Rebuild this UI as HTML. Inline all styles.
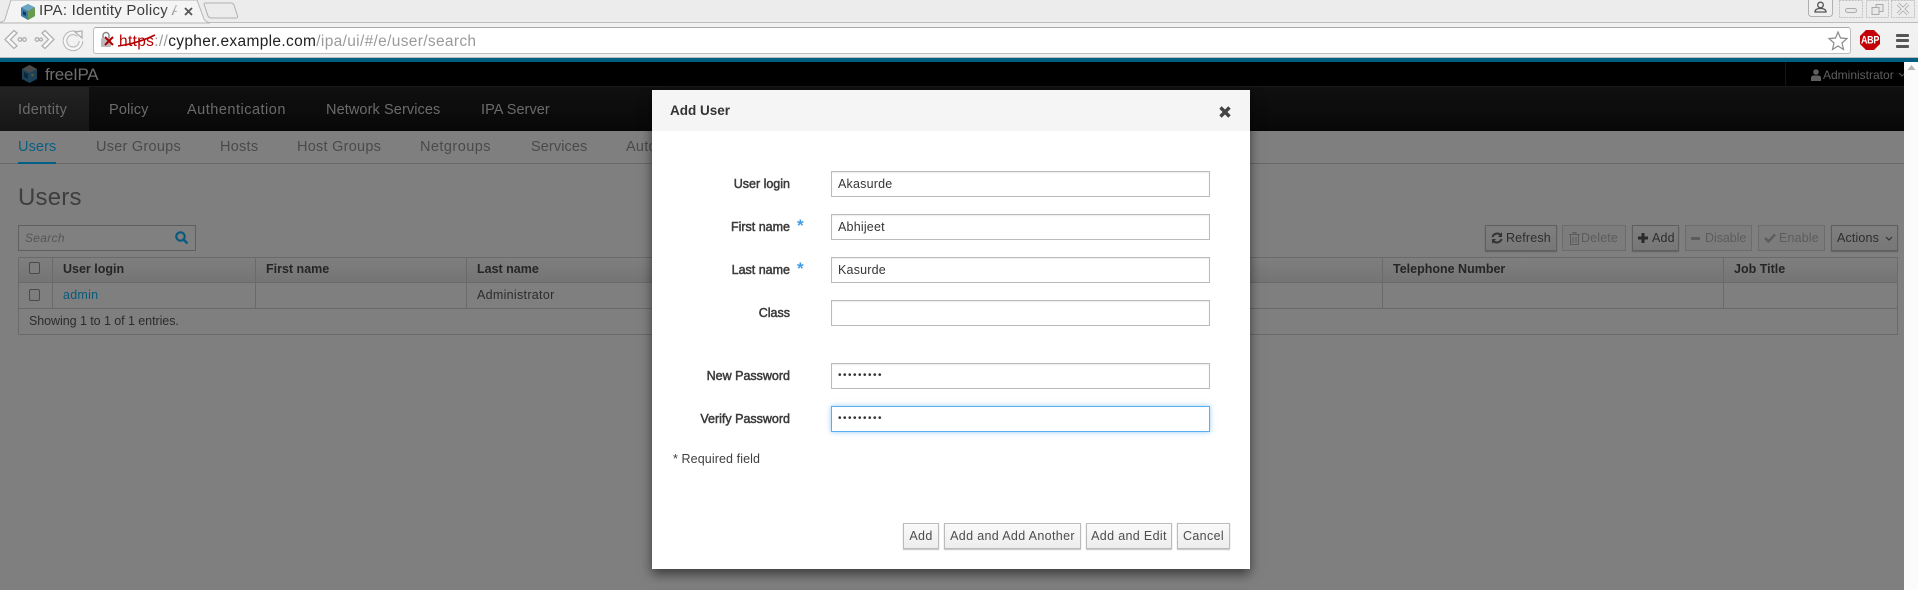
<!DOCTYPE html>
<html><head><meta charset="utf-8"><title>IPA: Identity Policy Audit</title>
<style>
html,body{margin:0;padding:0;width:1918px;height:590px;overflow:hidden;background:#7f7f7f;font-family:"Liberation Sans",sans-serif}
.a{position:absolute;white-space:nowrap}
.t{position:absolute;white-space:nowrap;line-height:20px;height:20px}
svg{position:absolute;overflow:visible}
.nav{font-size:14.5px;color:#6b6b6b;letter-spacing:.2px}
.sub{font-size:14.5px;color:#4a4a4a;letter-spacing:.25px}
.th{font-size:12.5px;font-weight:bold;color:#252525;transform-origin:0 50%}
.td{font-size:12.5px;color:#2c2c2c;letter-spacing:.25px}
.vl{position:absolute;width:1px;background:#6a6a6a}
.lb{position:absolute;white-space:nowrap;right:1128px;font-size:12.5px;font-weight:normal;-webkit-text-stroke:.5px #3b3b3b;color:#3b3b3b;line-height:20px}
.in{position:absolute;left:831px;width:377px;height:24px;background:#fff;border:1px solid #bbb;box-shadow:inset 0 1px 1px rgba(0,0,0,.08);font-size:12.5px;line-height:24px;color:#363636;text-indent:6px;letter-spacing:.2px}
.bt{position:absolute;box-sizing:border-box;height:26px;top:523px;border:1px solid #bbb;background:linear-gradient(#fafafa,#ededed);box-shadow:0 1px 1px rgba(0,0,0,.25);font-size:12.5px;font-weight:normal;line-height:24px;color:#4d4d4d;text-align:center;letter-spacing:.35px}
.tb{position:absolute;box-sizing:border-box;height:26px;top:225px;border:1px solid #5f5f5f;background:linear-gradient(#7f7f7f,#777);font-size:12.5px;line-height:24px;color:#2d2d2d;box-shadow:0 1px 1px rgba(0,0,0,.25);letter-spacing:.15px}
.tb.d{border-color:#6c6c6c;color:#5c5c5c;box-shadow:none;background:#7c7c7c}
.cb{position:absolute;box-sizing:border-box;width:11px;height:12px;border:1px solid #4a4a4a;border-radius:2px;background:#7d7d7d}
.pw{font-size:10px;letter-spacing:1.5px;color:#333}
</style></head><body>

<!-- browser chrome -->
<div class="a" style="left:0;top:0;width:1918px;height:22px;background:#ececec"></div>
<div class="a" style="left:0;top:22px;width:1918px;height:36px;background:linear-gradient(#f2f2f2,#f0f0f0);border-top:1px solid #bdbdbd;box-sizing:border-box;border-bottom:1px solid #bbb"></div>
<svg style="left:0;top:0" width="240" height="24"><path d="M0 23 L1 22 Q4 22 5 19 L11 0 L197 0 L204 19 Q206 22 210 23 Z" fill="#f4f4f4" stroke="#b5b5b5"/><path d="M204 4 Q204 3 206 3 L231 3 Q233 3 234 5 L237.500 16 Q238 18 236 18 L212 18 Q209 18 208 16 Z" fill="#ececec" stroke="#b0b0b0"/></svg>
<svg style="left:20px;top:4px" width="16" height="16" viewBox="0 0 16 16"><path d="M8 0 L15 3.500 V12 L8 16 L1 12 V3.500 Z" fill="#3d7ca6"/><path d="M8 0 L15 3.500 L8 7 L1 3.500 Z" fill="#6da6c4"/><path d="M8 7 L15 3.500 V12 L8 16 Z" fill="#6a9a50"/><path d="M3 7 L6 8.500 V12 L3 10.500Z" fill="#123a5a"/></svg>
<div class="t" style="left:39px;top:1px;font-size:15px;color:#3b3b3b;letter-spacing:.25px;width:138px;overflow:hidden;-webkit-mask-image:linear-gradient(90deg,#000 125px,rgba(0,0,0,.25) 138px)">IPA: Identity Policy Audit</div>
<svg style="left:184px;top:7px" width="9" height="9"><path d="M1 1 L8 8 M8 1 L1 8" stroke="#555" stroke-width="1.800"/></svg>

<!-- window controls -->
<svg style="left:1808px;top:-1px" width="110" height="20">
<rect x=".5" y="-3" width="24" height="20.500" rx="3" fill="#efefef" stroke="#b0b0b0"/>
<circle cx="12.500" cy="6" r="2.800" fill="none" stroke="#555" stroke-width="1.300"/><path d="M7 13 Q7 9.500 12.500 9.500 Q18 9.500 18 13 Z" fill="none" stroke="#555" stroke-width="1.300"/>
<g fill="none" stroke="#c0c0c0" stroke-dasharray="2 1"><rect x="31.500" y="1.500" width="23" height="17"/><rect x="58.500" y="1.500" width="22" height="17"/><rect x="83.500" y="1.500" width="23" height="17"/></g>
<rect x="37.500" y="9.500" width="11" height="4" rx="2" fill="#e8e8e8" stroke="#aaa"/>
<g fill="#e8e8e8" stroke="#aaa"><rect x="68" y="5.500" width="7" height="7"/><rect x="64" y="8.500" width="7" height="7"/></g>
<path d="M90 5 L100 15 M100 5 L90 15" stroke="#aaa" stroke-width="3.400"/><path d="M90 5 L100 15 M100 5 L90 15" stroke="#eee" stroke-width="1.800"/>
</svg>

<!-- toolbar icons -->
<svg style="left:4px;top:29px" width="90" height="22" fill="none" stroke="#b0b0b0" stroke-width="1.300">
<path d="M10 1.500 L1 10.500 L10 19.500 L13 17 L6.500 10.500 L13 4 Z" fill="#fafafa"/><circle cx="16" cy="10.500" r="1.800"/><circle cx="20.500" cy="10.500" r="1.800"/>
<path d="M41 1.500 L50 10.500 L41 19.500 L38 17 L44.500 10.500 L38 4 Z" fill="#fafafa"/><circle cx="33" cy="10.500" r="1.800"/><circle cx="37" cy="10.500" r="1.500"/>
<path d="M74.500 6 A8 8 0 1 0 77 12" stroke-width="4.600" stroke="#b5b5b5"/><path d="M74.500 6 A8 8 0 1 0 77 12" stroke-width="2.600" stroke="#f6f6f6"/><path d="M71 3 L78 2 L78 9 Z" fill="#f6f6f6"/>
</svg>

<!-- url bar -->
<div class="a" style="left:93px;top:27px;width:1758px;height:27px;box-sizing:border-box;background:#fff;border:1px solid #bdbdbd;border-top-color:#a8a8a8;border-radius:3px"></div>
<svg style="left:100px;top:31px" width="20" height="18"><rect x="1" y="7" width="10" height="9" rx="1" fill="#bbb"/><path d="M3 7 V4.500 A3 3 0 0 1 9 4.500 V7" fill="none" stroke="#888" stroke-width="1.500"/><path d="M5 6 L13 14 M13 6 L5 14" stroke="#b40000" stroke-width="2"/></svg>
<div class="t" style="left:119px;top:32px;font-size:15.500px;letter-spacing:.33px;color:#9a9a9a"><span style="color:#b40000">https</span>://<span style="color:#202020">cypher.example.com</span>/ipa/ui/#/e/user/search</div>
<svg style="left:118px;top:33px" width="40" height="16"><path d="M0 13 Q18 11 37 2" fill="none" stroke="#b40000" stroke-width="1.600"/></svg>
<svg style="left:1828px;top:31px" width="20" height="19"><path d="M10 1 L12.500 7 L19 7.500 L14 12 L15.500 18.500 L10 15 L4.500 18.500 L6 12 L1 7.500 L7.500 7 Z" fill="#fff" stroke="#8a8a8a" stroke-width="1.200"/></svg>
<svg style="left:1860px;top:30px" width="20" height="20"><path d="M6 0 H14 L20 6 V14 L14 20 H6 L0 14 V6 Z" fill="#c20006"/></svg>
<div class="a" style="left:1860px;top:30px;width:20px;text-align:center;line-height:20px;font-size:9px;font-weight:bold;color:#fff;letter-spacing:-.3px;transform:scaleY(1.200)">ABP</div>
<div class="a" style="left:1896px;top:34px;width:13px;height:3px;background:#555;border-radius:1px"></div>
<div class="a" style="left:1896px;top:39px;width:13px;height:3px;background:#555;border-radius:1px"></div>
<div class="a" style="left:1896px;top:45px;width:13px;height:3px;background:#555;border-radius:1px"></div>

<!-- page -->
<div class="a" style="left:0;top:58px;width:1918px;height:4px;background:#005e80"></div>
<div class="a" style="left:0;top:62px;width:1904px;height:25px;background:#000;border-bottom:1px solid #1a1a1a;box-sizing:border-box"></div>
<div class="a" style="left:0;top:87px;width:1904px;height:44px;background:linear-gradient(#101010,#080808)"></div>
<div class="a" style="left:0;top:87px;width:89px;height:44px;background:linear-gradient(#232323,#161616)"></div>
<div class="a" style="left:0;top:131px;width:1904px;height:459px;background:#7f7f7f"></div>
<div class="a" style="left:0;top:163px;width:1904px;height:1px;background:#686868"></div>
<div class="a" style="left:1904px;top:62px;width:14px;height:528px;background:#fbfbfb"></div>
<svg style="left:1907px;top:64px" width="9" height="7"><path d="M4.500 1 L8.500 6 H.5 Z" fill="#b5b5b5"/></svg>

<!-- logo -->
<svg style="left:21px;top:65px" width="17" height="18" viewBox="0 0 17 18"><path d="M8.500 0 L16 4 V14 L8.500 18 L1 14 V4 Z" fill="#1d4257"/><path d="M8.500 0 L16 4 L8.500 8 L1 4 Z" fill="#4a4a4a"/><path d="M3 7 L7 9 V14 L3 12 Z" fill="#0c2739"/><circle cx="11.500" cy="10" r="1.300" fill="#5a5a3a"/></svg>
<div class="t" style="left:45px;top:65px;font-size:17px;color:#6e6e6e;letter-spacing:-.3px">freeIPA</div>

<!-- admin -->
<div class="a" style="left:1785px;top:62px;width:1px;height:25px;background:#161616"></div>
<svg style="left:1811px;top:69px" width="10" height="12"><circle cx="5" cy="3" r="2.800" fill="#5f5f5f"/><path d="M0 12 V9 Q0 6.500 3 6.500 H7 Q10 6.500 10 9 V12 Z" fill="#5f5f5f"/></svg>
<div class="t" style="left:1823px;top:65px;font-size:12px;color:#5f5f5f">Administrator</div>
<svg style="left:1899px;top:72px" width="6" height="6"><path d="M0 1 L3 4 L5 2" fill="none" stroke="#555"/></svg>

<!-- nav -->
<div class="t nav" style="left:18px;top:100px;letter-spacing:.3px">Identity</div>
<div class="t nav" style="left:109px;top:100px;letter-spacing:.15px">Policy</div>
<div class="t nav" style="left:187px;top:100px;letter-spacing:.5px">Authentication</div>
<div class="t nav" style="left:326px;top:100px;letter-spacing:.1px">Network Services</div>
<div class="t nav" style="left:481px;top:100px;letter-spacing:.05px">IPA Server</div>

<!-- subnav -->
<div class="t sub" style="left:18px;top:137px;color:#0b5f85;letter-spacing:.1px">Users</div>
<div class="a" style="left:18px;top:162px;width:38px;height:2px;background:#005f86"></div>
<div class="t sub" style="left:96px;top:137px">User Groups</div>
<div class="t sub" style="left:220px;top:137px">Hosts</div>
<div class="t sub" style="left:297px;top:137px">Host Groups</div>
<div class="t sub" style="left:420px;top:137px;letter-spacing:.45px">Netgroups</div>
<div class="t sub" style="left:531px;top:137px;letter-spacing:.1px">Services</div>
<div class="t sub" style="left:626px;top:137px">Automember</div>

<div class="a" style="left:18px;top:183px;font-size:24px;line-height:30px;color:#3e3e3e;letter-spacing:.2px">Users</div>

<!-- search -->
<div class="a" style="left:18px;top:225px;width:178px;height:26px;box-sizing:border-box;border:1px solid #5f5f5f;background:#808080"></div>
<div class="t" style="left:25px;top:228px;font-size:12px;font-style:italic;color:#565656;letter-spacing:.3px">Search</div>
<svg style="left:175px;top:231px" width="14" height="14"><circle cx="5.500" cy="5.500" r="4.200" fill="none" stroke="#0a5a7d" stroke-width="2.200"/><path d="M8.500 8.500 L12.500 12.500" stroke="#0a5a7d" stroke-width="2.400"/></svg>

<!-- toolbar buttons -->
<div class="tb" style="left:1485px;width:72px;padding-left:20px">Refresh</div>
<svg style="left:1491px;top:232px" width="12" height="12" fill="none" stroke="#333" stroke-width="2"><path d="M1.500 5 A4.800 4.800 0 0 1 10 3.500"/><path d="M10.500 7 A4.800 4.800 0 0 1 2 8.500"/><path d="M11 0 V5 H7 Z M1 12 V7 H5 Z" fill="#333" stroke="none"/></svg>
<div class="tb d" style="left:1562px;width:64px;padding-left:18px">Delete</div>
<svg style="left:1569px;top:232px" width="11" height="13" fill="none" stroke="#5c5c5c"><path d="M0 2.500 H11 M4 2 V.5 H7 V2 M1.500 3 V12.500 H9.500 V3 M4 5 V11 M7 5 V11"/></svg>
<div class="tb" style="left:1632px;width:47px;padding-left:19px;font-weight:normal">Add</div>
<svg style="left:1638px;top:233px" width="10" height="10"><path d="M0 5 H10 M5 0 V10" stroke="#2a2a2a" stroke-width="3"/></svg>
<div class="tb d" style="left:1685px;width:67px;padding-left:19px;letter-spacing:-.05px">Disable</div>
<div class="a" style="left:1691px;top:237px;width:9px;height:3px;background:#5c5c5c"></div>
<div class="tb d" style="left:1758px;width:67px;padding-left:20px">Enable</div>
<svg style="left:1764px;top:233px" width="12" height="10"><path d="M1 5 L4.500 8.500 L11 1.500" fill="none" stroke="#5c5c5c" stroke-width="2.400"/></svg>
<div class="tb" style="left:1831px;width:67px;padding-left:5px">Actions</div>
<svg style="left:1885px;top:236px" width="8" height="6"><path d="M1 1 L4 4 L7 1" fill="none" stroke="#333" stroke-width="1.200"/></svg>

<!-- table -->
<div class="a" style="left:18px;top:257px;width:1880px;height:78px;box-sizing:border-box;border:1px solid #6a6a6a"></div>
<div class="a" style="left:19px;top:258px;width:1878px;height:24px;background:linear-gradient(#7f7f7f,#747474)"></div>
<div class="a" style="left:19px;top:282px;width:1878px;height:1px;background:#6a6a6a"></div>
<div class="a" style="left:19px;top:308px;width:1878px;height:1px;background:#6a6a6a"></div>
<div class="vl" style="left:52px;top:258px;height:50px"></div>
<div class="vl" style="left:255px;top:258px;height:50px"></div>
<div class="vl" style="left:466px;top:258px;height:50px"></div>
<div class="vl" style="left:1382px;top:258px;height:50px"></div>
<div class="vl" style="left:1723px;top:258px;height:50px"></div>
<div class="cb" style="left:29px;top:262px"></div>
<div class="cb" style="left:29px;top:289px"></div>
<div class="t th" style="left:63px;top:259px">User login</div>
<div class="t th" style="left:266px;top:259px">First name</div>
<div class="t th" style="left:477px;top:259px">Last name</div>
<div class="t th" style="left:1393px;top:259px">Telephone Number</div>
<div class="t th" style="left:1734px;top:259px">Job Title</div>
<div class="t td" style="left:63px;top:285px;color:#085a7c">admin</div>
<div class="t td" style="left:477px;top:285px;letter-spacing:.3px">Administrator</div>
<div class="t td" style="left:29px;top:311px;letter-spacing:-.06px">Showing 1 to 1 of 1 entries.</div>

<!-- dialog -->
<div class="a" style="left:652px;top:90px;width:598px;height:479px;background:#fff;box-shadow:0 5px 11px rgba(0,0,0,.55)"></div>
<div class="a" style="left:652px;top:90px;width:598px;height:41px;background:#f5f5f5"></div>
<div class="t" style="left:670px;top:101px;font-size:13.500px;font-weight:bold;color:#333">Add User</div>
<svg style="left:1219px;top:106px" width="12" height="12"><path d="M1.500 1.500 L10.500 10.500 M10.500 1.500 L1.500 10.500" stroke="#444" stroke-width="3.400"/></svg>

<div class="lb" style="top:174px">User login</div>
<div class="lb" style="top:217px">First name</div>
<div class="lb" style="top:260px">Last name</div>
<div class="lb" style="top:303px">Class</div>
<div class="lb" style="top:366px">New Password</div>
<div class="lb" style="top:409px">Verify Password</div>
<div class="a" style="left:797px;top:217px;font-size:17px;line-height:17px;font-weight:bold;color:#3f9ce8">*</div>
<div class="a" style="left:797px;top:260px;font-size:17px;line-height:17px;font-weight:bold;color:#3f9ce8">*</div>

<div class="in" style="top:171px">Akasurde</div>
<div class="in" style="top:214px">Abhijeet</div>
<div class="in" style="top:257px">Kasurde</div>
<div class="in" style="top:300px"></div>
<div class="in pw" style="top:363px">•••••••••</div>
<div class="in pw" style="top:406px;border-color:#5aaef0;box-shadow:0 0 5px rgba(80,170,240,.6)">•••••••••</div>

<div class="t" style="left:673px;top:449px;font-size:12.500px;color:#3f3f3f;letter-spacing:.1px">* Required field</div>

<div class="bt" style="left:903px;width:36px">Add</div>
<div class="bt" style="left:944px;width:137px">Add and Add Another</div>
<div class="bt" style="left:1086px;width:86px">Add and Edit</div>
<div class="bt" style="left:1177px;width:53px">Cancel</div>

</body></html>
